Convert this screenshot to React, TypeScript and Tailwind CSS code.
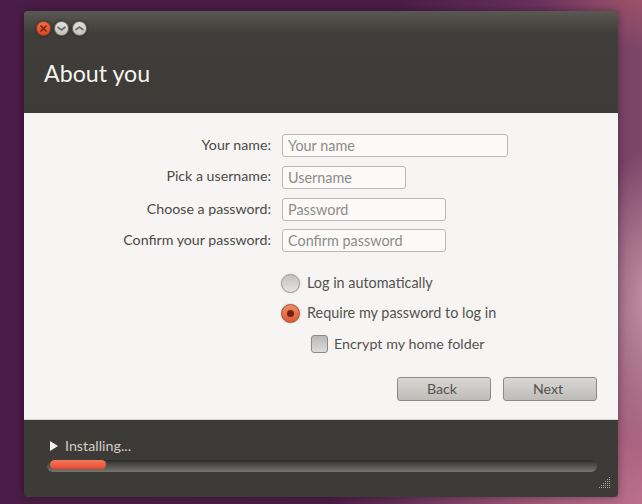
const font = 'font-["Lato","Open_Sans",sans-serif]';

function Field({ label, placeholder, width, labelPad }: { label: string; placeholder: string; width: string; labelPad: string }) {
  return (
    <div className="flex items-center h-[23px]">
      <div className={`w-[247px] text-right text-[14.2px] text-[#4c4a46] whitespace-nowrap ${labelPad}`}>{label}</div>
      <div className={`ml-[11px] h-[23px] ${width} px-[5px] flex items-center bg-[#fbfaf9] border border-[#bcbab5] rounded-[3px] text-[14.4px] text-[#8e8c88]`}>
        {placeholder}
      </div>
    </div>
  );
}

function Radio({ on, label }: { on?: boolean; label: string }) {
  return (
    <div className="flex items-center h-[20px] gap-[7px]">
      {on ? (
        <div className="w-[19px] h-[19px] rounded-full border border-[#a9482b] bg-gradient-to-b from-[#f08a66] to-[#dc5a34] shadow-[0_0_2px_rgba(0,0,0,0.25)] flex items-center justify-center">
          <div className="w-[7px] h-[7px] rounded-full bg-[#6e2413]" />
        </div>
      ) : (
        <div className="w-[19px] h-[19px] rounded-full border border-[#9b9a96] bg-gradient-to-b from-[#c4c3c0] to-[#e4e3e0] shadow-[0_0_2px_rgba(0,0,0,0.2)]" />
      )}
      <span className="text-[14.4px] text-[#55534f]">{label}</span>
    </div>
  );
}

function WinButton({ up }: { up?: boolean }) {
  return (
    <div className="w-[15px] h-[15px] rounded-full border border-[#6f6d68] bg-gradient-to-b from-[#e2e1dd] to-[#c4c2bd] shadow-[0_0_3px_rgba(0,0,0,0.5)] flex items-center justify-center">
      <svg width="11" height="9" viewBox="0 0 11 9" fill="none" stroke="#6a6863" strokeWidth="1.6">
        <path d={up ? 'M1.5 6L5.5 3L9.5 6' : 'M1.5 3L5.5 6L9.5 3'} />
      </svg>
    </div>
  );
}

function NavButton({ label }: { label: string }) {
  return (
    <div className="w-[94px] h-[24px] pr-[4px] flex items-center justify-center rounded-[3px] border border-[#8b8a86] bg-gradient-to-b from-[#d9d8d5] to-[#bdbcb9] text-[14.2px] text-[#55534f]">
      {label}
    </div>
  );
}

export default function App() {
  return (
    <div className={`w-[642px] h-[504px] overflow-hidden pt-[11px] pl-[24px] bg-[radial-gradient(ellipse_70px_150px_at_650px_300px,rgba(200,150,170,0.95),rgba(200,150,170,0)),radial-gradient(ellipse_330px_210px_at_660px_504px,rgba(190,112,138,1),rgba(190,112,138,0)),radial-gradient(ellipse_100px_50px_at_640px_0px,rgba(170,85,105,0.7),rgba(170,85,105,0)),linear-gradient(90deg,#4a1d48_0%,#4b1d48_62%,#6e3560_88%,#7d4768_100%)] ${font}`}>
      <div className="w-[594px] h-[486px] flex flex-col rounded-[4px] overflow-hidden bg-[#3d3b37] shadow-[0_0_8px_rgba(0,0,0,0.35)]">
        <div className="h-[102px] shrink-0 bg-[linear-gradient(180deg,#5a5852_0px,#403e3a_22px,#3d3b37_100%)]">
          <div className="flex items-center gap-[3px] pl-[12px] pt-[10px]">
            <div className="w-[15px] h-[15px] rounded-full border border-[#9c3c20] bg-gradient-to-b from-[#f0714a] to-[#d9481f] shadow-[0_0_3px_rgba(0,0,0,0.5)] flex items-center justify-center">
              <svg width="9" height="9" viewBox="0 0 9 9" fill="none" stroke="#6d2412" strokeWidth="1.5">
                <path d="M1.5 1.5L7.5 7.5M7.5 1.5L1.5 7.5" />
              </svg>
            </div>
            <WinButton />
            <WinButton up />
          </div>
          <h1 className="mt-[22px] ml-[20px] text-[23.2px] leading-[30px] text-[#f5f4f1]">About you</h1>
        </div>

        <div className="h-[307px] shrink-0 bg-[#f6f5f3] pt-[21px] border-b border-[#d5d4d1]">
          <div className="flex flex-col">
            <Field label="Your name:" placeholder="Your name" width="w-[226px]" labelPad="pb-[2px]" />
            <div className="h-[9px]" />
            <Field label="Pick a username:" placeholder="Username" width="w-[124px]" labelPad="pb-[4px]" />
            <div className="h-[9px]" />
            <Field label="Choose a password:" placeholder="Password" width="w-[164px]" labelPad="pb-[1px]" />
            <div className="h-[8px]" />
            <Field label="Confirm your password:" placeholder="Confirm password" width="w-[164px]" labelPad="pb-[1px]" />
          </div>
          <div className="mt-[21px] ml-[257px] flex flex-col">
            <Radio label="Log in automatically" />
            <div className="h-[10px]" />
            <Radio on label="Require my password to log in" />
            <div className="h-[11px]" />
            <div className="flex items-center h-[20px] gap-[6px] ml-[30px]">
              <div className="w-[17px] h-[18px] rounded-[3px] border border-[#8b8a86] bg-gradient-to-b from-[#b9b8b5] to-[#dddcd9]" />
              <span className="text-[14.3px] text-[#55534f]">Encrypt my home folder</span>
            </div>
          </div>
          <div className="mt-[23px] pr-[21px] flex justify-end gap-[12px]">
            <NavButton label="Back" />
            <NavButton label="Next" />
          </div>
        </div>

        <div className="flex-1 relative pl-[23px] pr-[21px] pt-[17px]">
          <div className="flex items-center gap-[7px] h-[18px] text-[14.3px] text-[#cfcdc8]">
            <div className="ml-[3px] w-0 h-0 border-y-[5px] border-y-transparent border-l-[8px] border-l-[#f5f4f1]" />
            Installing...
          </div>
          <div className="mt-[5px] h-[12px] rounded-full bg-[linear-gradient(180deg,#2c2a27_0%,#4a4844_35%,#777571_100%)] pl-[3px]">
            <div className="w-[56px] h-[9px] rounded-full bg-gradient-to-b from-[#f47a5e] to-[#e8452c]" />
          </div>
          <svg className="absolute right-[7px] bottom-[8px]" width="13" height="13" viewBox="0 0 13 13" fill="#a5a39e">
            <rect x="11" y="1" width="1" height="1" />
            <rect x="9" y="3" width="1" height="1" /><rect x="11" y="3" width="1" height="1" />
            <rect x="7" y="5" width="1" height="1" /><rect x="9" y="5" width="1" height="1" /><rect x="11" y="5" width="1" height="1" />
            <rect x="5" y="7" width="1" height="1" /><rect x="7" y="7" width="1" height="1" /><rect x="9" y="7" width="1" height="1" /><rect x="11" y="7" width="1" height="1" />
            <rect x="3" y="9" width="1" height="1" /><rect x="5" y="9" width="1" height="1" /><rect x="7" y="9" width="1" height="1" /><rect x="9" y="9" width="1" height="1" /><rect x="11" y="9" width="1" height="1" />
            <rect x="1" y="11" width="1" height="1" /><rect x="3" y="11" width="1" height="1" /><rect x="5" y="11" width="1" height="1" /><rect x="7" y="11" width="1" height="1" /><rect x="9" y="11" width="1" height="1" /><rect x="11" y="11" width="1" height="1" />
          </svg>
        </div>
      </div>
    </div>
  );
}
